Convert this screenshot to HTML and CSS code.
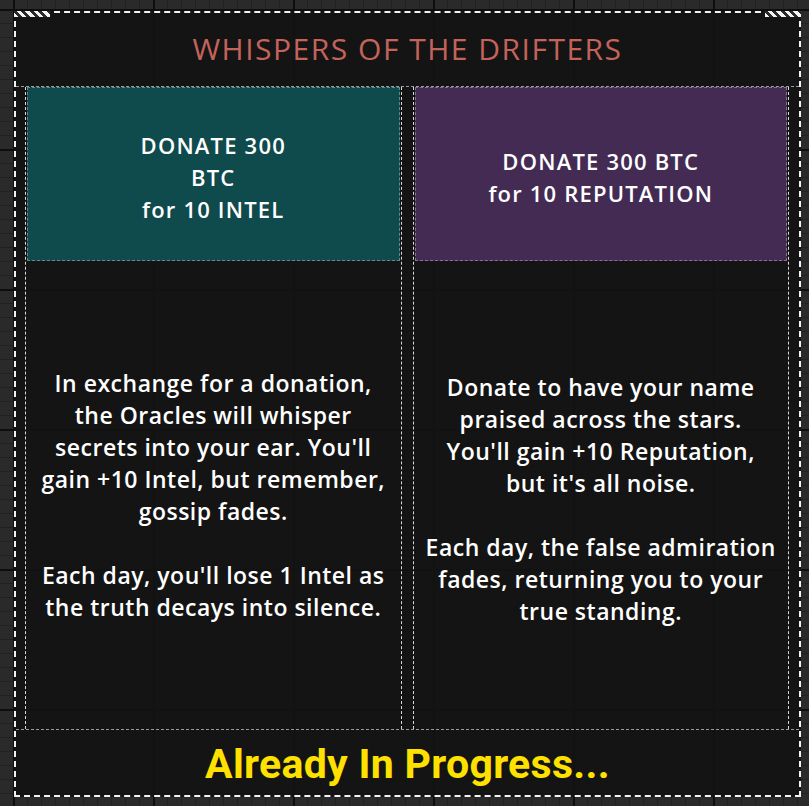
FILE: index.html
```html
<!DOCTYPE html>
<html lang="en">
<head>
    <meta charset="UTF-8">
    <title>Whispers of the Drifters</title>
    <link rel="stylesheet" href="styles.css">
</head>
<body>
    <div id="panel">
        <div class="hatch left"></div>
        <div class="hatch right"></div>

        <div id="header">WHISPERS OF THE DRIFTERS</div>

        <div id="options">
            <div class="option">
                <div class="card intel">DONATE 300<br>BTC<br>for 10 INTEL</div>
                <div class="desc">
                    <p>In exchange for a donation,<br>the Oracles will whisper<br>secrets into your ear. You'll<br>gain +10 Intel, but remember,<br>gossip fades.</p>
                    <p>Each day, you'll lose 1 Intel as<br>the truth decays into silence.</p>
                </div>
            </div>
            <div class="option">
                <div class="card reputation">DONATE 300 BTC<br>for 10 REPUTATION</div>
                <div class="desc shifted">
                    <p>Donate to have your name<br>praised across the stars.<br>You'll gain +10 Reputation,<br>but it's all noise.</p>
                    <p>Each day, the false admiration<br>fades, returning you to your<br>true standing.</p>
                </div>
            </div>
        </div>

        <div id="status">Already In Progress...</div>
    </div>
</body>
</html>
```

FILE: styles.css
```css
body {
    margin: 0;
    font-family: "Open Sans", sans-serif;
    background-color: #2a2a2a;
    background-image:
        linear-gradient(to right, #0e0e0e 2px, transparent 2px),
        linear-gradient(to bottom, #0e0e0e 2px, transparent 2px),
        linear-gradient(to right, #212121 1px, transparent 1px),
        linear-gradient(to bottom, #212121 1px, transparent 1px);
    background-size: 140px 140px, 140px 140px, 14px 14px, 14px 14px;
    background-position: 13px 9px, 13px 9px, 13px 9px, 13px 9px;
    height: 806px;
    overflow: hidden;
}
#panel {
    position: relative;
    box-sizing: border-box;
    width: 787px;
    height: 786px;
    margin: 11px 0 0 14px;
    border: 2px dashed #f2f2f2;
    background-color: rgba(18, 18, 18, 0.93);
    display: flex;
    flex-direction: column;
}
.hatch {
    position: absolute;
    top: -2px;
    width: 36px;
    height: 6px;
    background: repeating-linear-gradient(45deg, #f4f4f4 0 3px, #2a2a2a 3px 6px);
}
.hatch.left {
    left: -2px;
}
.hatch.right {
    right: -2px;
}
#header {
    height: 73px;
    display: flex;
    align-items: center;
    justify-content: center;
    color: #c4635b;
    font-size: 30px;
    letter-spacing: 1.5px;
    padding-bottom: 3px;
    box-sizing: border-box;
}
#options {
    height: 644px;
    box-sizing: border-box;
    border-top: 1px dashed #9a9a9a;
    border-bottom: 1px dashed #9a9a9a;
    padding: 0 10px 0 9px;
    display: grid;
    grid-template-columns: 1fr 1fr;
    gap: 11px;
}
.option {
    border-left: 1px dashed #d8d8d8;
    border-right: 1px dashed #d8d8d8;
    padding: 0 1px;
    display: flex;
    flex-direction: column;
}
.card {
    height: 174px;
    box-sizing: border-box;
    border: 1px dashed rgba(255, 255, 255, 0.35);
    display: flex;
    align-items: center;
    justify-content: center;
    text-align: center;
    color: #ffffff;
    font-size: 22px;
    font-weight: 600;
    letter-spacing: 1.2px;
    line-height: 32px;
    padding-top: 6px;
}
.card.intel {
    background-color: #0f4a4d;
}
.card.reputation {
    background-color: #442b54;
}
.desc {
    flex: 1;
    display: flex;
    flex-direction: column;
    justify-content: center;
    text-align: center;
    color: #ffffff;
    font-size: 23px;
    font-weight: 600;
    letter-spacing: 0.5px;
    line-height: 32px;
}
.desc.shifted {
    padding-top: 8px;
}
.desc p {
    margin: 0;
}
.desc p + p {
    margin-top: 32px;
}
#status {
    flex: 1;
    display: flex;
    align-items: center;
    justify-content: center;
    color: #ffe100;
    font-family: Roboto, sans-serif;
    font-weight: 700;
    font-size: 41px;
    letter-spacing: 0.3px;
    padding-top: 2px;
}
```
